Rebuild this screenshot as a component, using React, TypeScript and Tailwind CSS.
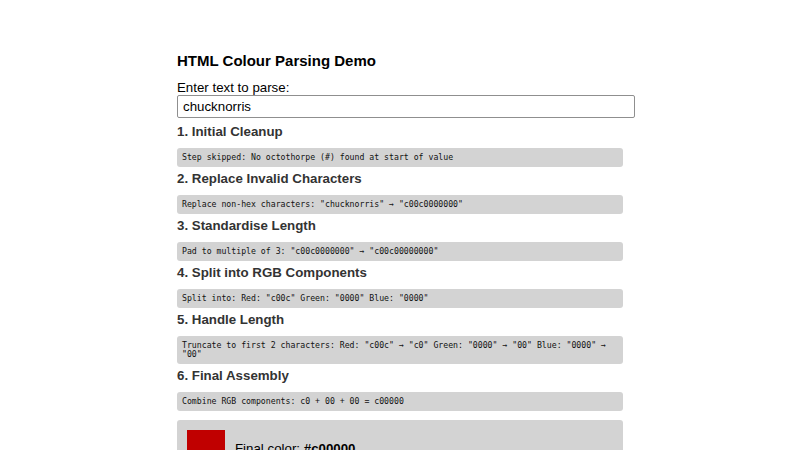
import React from 'react';

const sans = { fontFamily: '"Liberation Sans", Arial, sans-serif' };

const steps = [
  {
    title: '1. Initial Cleanup',
    text: 'Step skipped: No octothorpe (#) found at start of value',
  },
  {
    title: '2. Replace Invalid Characters',
    text: 'Replace non-hex characters: "chucknorris" → "c00c0000000"',
  },
  {
    title: '3. Standardise Length',
    text: 'Pad to multiple of 3: "c00c0000000" → "c00c00000000"',
  },
  {
    title: '4. Split into RGB Components',
    text: 'Split into: Red: "c00c" Green: "0000" Blue: "0000"',
  },
  {
    title: '5. Handle Length',
    text: 'Truncate to first 2 characters: Red: "c00c" → "c0" Green: "0000" → "00" Blue: "0000" → "00"',
  },
  {
    title: '6. Final Assembly',
    text: 'Combine RGB components: c0 + 00 + 00 = c00000',
  },
];

export default function App() {
  return (
    <div className="min-h-[450px] bg-white text-black" style={sans}>
      <div className="w-[446px] mx-auto pt-[52px]">
        <h1 className="text-[15px] leading-[18px] font-bold">HTML Colour Parsing Demo</h1>

        <label className="block mt-[10px] text-[13.3px] leading-[15px]">Enter text to parse:</label>
        <input
          defaultValue="chucknorris"
          className="block box-content w-full h-[21px] px-[5px] mb-[6px] border border-[#8f8f8f] rounded-[2px] text-[13.3px] outline-none"
          style={sans}
        />

        {steps.map((s) => (
          <div key={s.title}>
            <h3 className="mt-[4px] text-[13.3px] leading-[16px] font-bold text-[#333]">{s.title}</h3>
            <div
              className="mt-[8px] bg-[#d3d3d3] rounded-[3px] px-[5px] py-[5px] text-[8.2px] leading-[9px] text-[#111]"
              style={{ fontFamily: '"DejaVu Sans Mono", monospace' }}
            >
              {s.text}
            </div>
          </div>
        ))}

        <div className="mt-[9px] bg-[#d3d3d3] rounded-[3px] p-[10px] flex items-center gap-[10px]">
          <div className="w-[38px] h-[38px] bg-[#c00000]" />
          <div className="text-[13.3px]">
            Final color: <span className="font-bold">#c00000</span>
          </div>
        </div>
      </div>
    </div>
  );
}
